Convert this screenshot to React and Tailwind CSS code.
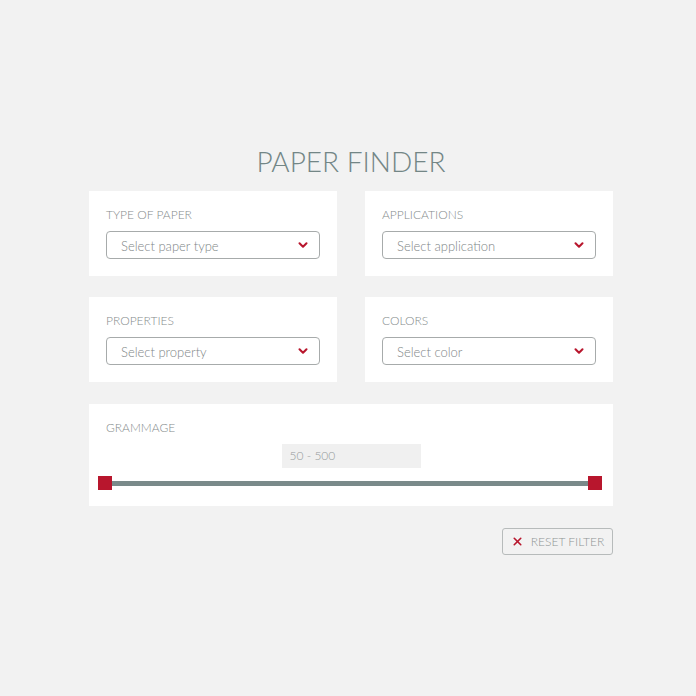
import React from 'react';
import { ChevronDown, X } from 'lucide-react';

const SelectField = ({ label, placeholder }) => (
  <div className="bg-white px-[17px] pt-[16px] pb-[17px]">
    <div className="text-[12px] leading-[16px] font-light text-[#858b8c] uppercase">{label}</div>
    <div className="mt-[8px] h-[28px] border border-[#a7abab] rounded-[4px] flex items-center justify-between pl-[14px] pr-[9px]">
      <span className="text-[13px] leading-[16px] pt-[2px] font-light text-[#808687]">{placeholder}</span>
      <ChevronDown className="w-[14px] h-[14px] text-[#b8162d]" strokeWidth={3.5} />
    </div>
  </div>
);

export default function App() {
  return (
    <div className="min-h-[696px] bg-[#f2f2f2] pt-[141px] font-['Lato','Open_Sans',sans-serif]">
      <div className="w-[524px] ml-[89px]">
        <h1 className="text-center text-[28px] leading-[40px] font-light text-[#738686]">PAPER FINDER</h1>

        <div className="mt-[10px] grid grid-cols-2 gap-x-[28px] gap-y-[21px]">
          <SelectField label="Type of paper" placeholder="Select paper type" />
          <SelectField label="Applications" placeholder="Select application" />
          <SelectField label="Properties" placeholder="Select property" />
          <SelectField label="Colors" placeholder="Select color" />
        </div>

        <div className="mt-[22px] bg-white pt-[16px] pb-[16px]">
          <div className="px-[17px] text-[12px] leading-[16px] font-light text-[#858b8c] uppercase">Grammage</div>
          <div className="mt-[8px] flex justify-center">
            <div className="w-[139px] h-[24px] bg-[#f0f0f0] flex items-center pl-[8px] text-[12px] font-light text-[#959a9b]">50 - 500</div>
          </div>
          <div className="relative mt-[8px] ml-[9px] mr-[11px] h-[14px] flex items-center">
            <div className="h-[5px] w-full bg-[#7a8a8a]" />
            <div className="absolute left-0 top-0 w-[14px] h-[14px] bg-[#b8162d]" />
            <div className="absolute right-0 top-0 w-[14px] h-[14px] bg-[#b8162d]" />
          </div>
        </div>

        <div className="mt-[22px] flex justify-end">
          <button className="h-[27px] w-[111px] border border-[#b7bbbb] rounded-[3px] flex items-center justify-center gap-[7px] text-[12px] font-light text-[#8f9595]">
            <X className="w-[13px] h-[13px] text-[#b8162d]" strokeWidth={3} />
            RESET FILTER
          </button>
        </div>
      </div>
    </div>
  );
}
